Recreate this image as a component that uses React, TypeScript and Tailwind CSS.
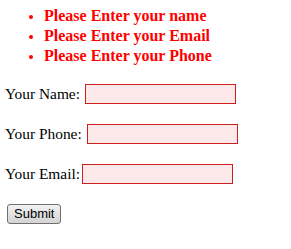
export default function App() {
  const errors = [
    "Please Enter your name",
    "Please Enter your Email",
    "Please Enter your Phone",
  ];

  const rows = [
    { label: "Your Name:", gap: "ml-[5px]" },
    { label: "Your Phone:", gap: "ml-[5px]" },
    { label: "Your Email:", gap: "ml-[2px]" },
  ];

  return (
    <div className="w-[291px] h-[249px] bg-white font-['Liberation_Serif',serif] text-[16px] text-black">
      {/* validation summary */}
      <ul className="list-disc pl-[44px] pt-[6px] text-[#ff0000] font-bold leading-[20px] marker:text-[15px]">
        {errors.map((e) => (
          <li key={e}>{e}</li>
        ))}
      </ul>

      {/* form */}
      <div className="pl-[5px] pt-[18px] flex flex-col gap-[20px]">
        {rows.map((r) => (
          <div key={r.label} className="flex items-center h-[20px]">
            <span className="leading-[20px] text-[15.4px]">{r.label}</span>
            <input
              className={`${r.gap} w-[151px] h-[20px] border border-[#cc1f1f] bg-[#fde9ea] outline-none`}
            />
          </div>
        ))}
        <div className="-mt-[3px] pl-[2px]">
          <button className="h-[20px] px-[6px] border border-[#707070] rounded-[3px] bg-gradient-to-b from-[#f2f2f2] to-[#d4d4d4] font-['Liberation_Sans',sans-serif] text-[13px] leading-[18px] text-black">
            Submit
          </button>
        </div>
      </div>
    </div>
  );
}
